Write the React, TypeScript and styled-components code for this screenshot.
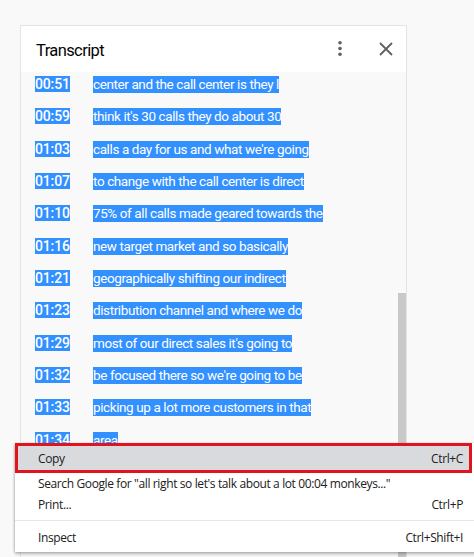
import React from "react";
import styled, { createGlobalStyle } from "styled-components";

const Global = createGlobalStyle`
  html, body {
    margin: 0;
    padding: 0;
    background: #f9f9f9;
    overflow: hidden;
  }
  * { box-sizing: border-box; }
`;

const Page = styled.div`
  position: relative;
  width: 474px;
  height: 557px;
  padding: 25px 0 0 20px;
  overflow: hidden;
`;

const Panel = styled.section`
  width: 387px;
  height: 532px;
  border: 1px solid #e4e4e4;
  border-bottom: none;
  background: #f9f9f9;
  display: flex;
  flex-direction: column;
`;

const Header = styled.header`
  height: 46px;
  flex: none;
  background: #ffffff;
  display: flex;
  align-items: center;
  padding: 0 8px 0 15px;
`;

const Title = styled.h2`
  flex: 1;
  margin: 0;
  font-family: Roboto, "Liberation Sans", sans-serif;
  font-size: 16.5px;
  letter-spacing: -0.6px;
  font-weight: 400;
  color: #030303;
  padding-top: 2px;
`;

const IconButton = styled.button<{ $gap?: number }>`
  width: 24px;
  height: 24px;
  padding: 0;
  border: none;
  background: transparent;
  display: flex;
  align-items: center;
  justify-content: center;
  margin-left: ${(p) => p.$gap ?? 0}px;
  color: #606060;
`;

const Body = styled.div`
  flex: 1;
  display: flex;
  min-height: 0;
`;

const List = styled.div`
  flex: 1;
  padding-left: 14px;
`;

const Row = styled.div`
  height: 32.33px;
  padding-top: 4px;
  display: flex;
  align-items: flex-start;
  font-family: Roboto, "Liberation Sans", sans-serif;
  font-size: 13.5px;
  line-height: 17px;
  color: #ffffff;
`;

const Stamp = styled.div`
  width: 58px;
  flex: none;
  font-size: 14px;
  font-weight: 500;
`;

const Selected = styled.span<{ $tight?: boolean }>`
  background: #3390ff;
  color: #ffffff;
  white-space: pre;
  letter-spacing: ${(p) => (p.$tight ? "-0.4px" : "-0.15px")};
`;

const Track = styled.div`
  width: 8px;
  flex: none;
  padding-top: 221px;
`;

const Thumb = styled.div`
  width: 8px;
  height: 300px;
  background: #c9c9c9;
`;

const Menu = styled.div`
  position: absolute;
  left: 15px;
  top: 443px;
  width: 470px;
  background: #ffffff;
  padding-bottom: 4px;
  box-shadow: 0 2px 3px rgba(0, 0, 0, 0.28), -1px 0 2px rgba(0, 0, 0, 0.12);
  font-family: "Open Sans", "Noto Sans", sans-serif;
  font-size: 12px;
  letter-spacing: -0.38px;
  color: #202020;
`;

const Item = styled.div<{ $active?: boolean }>`
  height: ${(p) => (p.$active ? 30 : 21)}px;
  width: 459px;
  display: flex;
  align-items: center;
  justify-content: space-between;
  padding: 0 11px 0 23px;
  ${(p) =>
    p.$active &&
    `
    width: 457px;
    background: #d9dadd;
    border: 3px solid #e0141f;
    padding: 0 6px 0 20px;
  `}
`;

const Separator = styled.div`
  height: 1px;
  width: 459px;
  margin: 5px 0 6px;
  background: #e6e6e6;
`;

const Shortcut = styled.span`
  color: #202020;
`;

const lines: [string, string][] = [
  ["00:51", "center and the call center is they l"],
  ["00:59", "think it's 30 calls they do about 30"],
  ["01:03", "calls a day for us and what we're going"],
  ["01:07", "to change with the call center is direct"],
  ["01:10", "75% of all calls made geared towards the"],
  ["01:16", "new target market and so basically"],
  ["01:21", "geographically shifting our indirect"],
  ["01:23", "distribution channel and where we do"],
  ["01:29", "most of our direct sales it's going to"],
  ["01:32", "be focused there so we're going to be"],
  ["01:33", "picking up a lot more customers in that"],
  ["01:34", "area"],
];

const DotsIcon = () => (
  <svg width="6" height="18" viewBox="0 0 6 18" fill="currentColor">
    <circle cx="3" cy="2.7" r="1.8" />
    <circle cx="3" cy="8.5" r="1.8" />
    <circle cx="3" cy="14.3" r="1.8" />
  </svg>
);

const CloseIcon = () => (
  <svg width="14" height="14" viewBox="0 0 14 14" stroke="currentColor" strokeWidth="1.8" fill="none">
    <path d="M1 1 L13 13 M13 1 L1 13" />
  </svg>
);

export default function App() {
  return (
    <Page>
      <Global />
      <Panel>
        <Header>
          <Title>Transcript</Title>
          <IconButton aria-label="More actions">
            <DotsIcon />
          </IconButton>
          <IconButton aria-label="Close" $gap={22}>
            <CloseIcon />
          </IconButton>
        </Header>
        <Body>
          <List>
            {lines.map(([t, text]) => (
              <Row key={t}>
                <Stamp>
                  <Selected>{t}</Selected>
                </Stamp>
                <Selected $tight>{text}</Selected>
              </Row>
            ))}
          </List>
          <Track>
            <Thumb />
          </Track>
        </Body>
      </Panel>
      <Menu>
        <Item $active>
          <span>Copy</span>
          <Shortcut>Ctrl+C</Shortcut>
        </Item>
        <Item>
          <span>Search Google for "all right so let's talk about a lot 00:04 monkeys..."</span>
        </Item>
        <Item>
          <span>Print...</span>
          <Shortcut>Ctrl+P</Shortcut>
        </Item>
        <Separator />
        <Item>
          <span>Inspect</span>
          <Shortcut>Ctrl+Shift+I</Shortcut>
        </Item>
      </Menu>
    </Page>
  );
}
